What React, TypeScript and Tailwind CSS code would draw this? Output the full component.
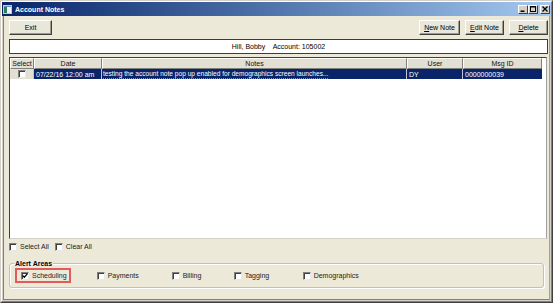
import React from "react";

function Check({ checked }: { checked?: boolean }) {
  return (
    <span className="inline-flex shrink-0 w-[8px] h-[8px] bg-white border-[1px] border-t-[#808080] border-l-[#808080] border-r-[#e8e8e8] border-b-[#e8e8e8] shadow-[inset_1px_1px_0_#404040] items-center justify-center">
      {checked && (
        <svg width="6" height="6" viewBox="0 0 6 6">
          <path d="M0.8 2.6 L2.3 4.2 L5.3 0.9" fill="none" stroke="#000" strokeWidth="1.3" />
        </svg>
      )}
    </span>
  );
}

function Btn({ children, w }: { children: React.ReactNode; w: string }) {
  return (
    <div
      className={`${w} h-[15px] flex items-center justify-center bg-[#e9e6da] border-[1px] border-t-white border-l-white border-r-[#404040] border-b-[#404040] shadow-[inset_-1px_-1px_0_#9d9a8f] text-[7px] leading-[9px] text-black`}
    >
      {children}
    </div>
  );
}

function WinBtn({ children }: { children: React.ReactNode }) {
  return (
    <div className="w-[10px] h-[9px] flex items-center justify-center bg-[#d4d0c8] border-[1px] border-t-white border-l-white border-r-[#404040] border-b-[#404040]">
      {children}
    </div>
  );
}

function HeaderCell({ w, children }: { w: string; children: React.ReactNode }) {
  return (
    <div
      className={`${w} shrink-0 h-full flex items-center justify-center bg-[#e2dfd3] border-[1px] border-t-white border-l-white border-r-[#808080] border-b-[#808080] text-[7px] leading-[9px] text-[#111]`}
    >
      {children}
    </div>
  );
}

export default function App() {
  return (
    <div className="w-[553px] h-[303px] bg-[#d4d0c8] border-[1px] border-t-[#d4d0c8] border-l-[#d4d0c8] border-r-[#404040] border-b-[#404040] flex flex-col overflow-hidden text-black font-['Liberation_Sans',Arial,sans-serif]">
      <div className="flex-1 flex flex-col border-[1px] border-t-white border-l-white border-r-[#808080] border-b-[#808080]">
        {/* Title bar */}
        <div className="h-[14px] shrink-0 flex items-center bg-linear-to-r from-[#0a246a] to-[#a6caf0] pl-[1px] pr-[1px]">
          <svg width="9" height="9" viewBox="0 0 9 9" className="shrink-0">
            <rect x="0" y="0" width="9" height="9" fill="#c8c8c8" />
            <rect x="1" y="1" width="7" height="7" fill="#f4f4f4" />
            <rect x="1" y="1" width="3" height="7" fill="#2e7d5b" />
            <rect x="1" y="1" width="7" height="1" fill="#6a8fb8" />
          </svg>
          <span className="ml-[3px] text-[7px] leading-[9px] font-bold text-white">Account Notes</span>
          <div className="ml-auto flex items-center">
            <WinBtn>
              <svg width="6" height="5" viewBox="0 0 6 5">
                <rect x="0.5" y="3.5" width="4" height="1.5" fill="#000" />
              </svg>
            </WinBtn>
            <WinBtn>
              <svg width="6" height="6" viewBox="0 0 6 6">
                <rect x="0.5" y="0.5" width="5" height="5" fill="none" stroke="#000" strokeWidth="1" />
                <rect x="0" y="0" width="6" height="1.5" fill="#000" />
              </svg>
            </WinBtn>
            <div className="w-[2px]" />
            <WinBtn>
              <svg width="6" height="6" viewBox="0 0 6 6">
                <path d="M0.5 0.5 L5.5 5.5 M5.5 0.5 L0.5 5.5" stroke="#000" strokeWidth="1.3" />
              </svg>
            </WinBtn>
          </div>
        </div>

        {/* Client area */}
        <div className="flex-1 flex flex-col bg-[#ece9d8] border-[1px] border-t-0 border-l-[#808080] border-r-[#a0a0a0] border-b-[#808080] ml-[1px] mr-[1px] mb-[1px] pl-[5px] pr-[1px] pt-[4px] pb-[11px]">
          {/* Buttons */}
          <div className="flex items-start justify-between">
            <Btn w="w-[43px]">Exit</Btn>
            <div className="flex gap-[5px]">
              <Btn w="w-[41px]">
                <span>
                  <span className="underline">N</span>ew Note
                </span>
              </Btn>
              <Btn w="w-[39px]">
                <span>
                  <span className="underline">E</span>dit Note
                </span>
              </Btn>
              <Btn w="w-[39px]">
                <span>
                  <span className="underline">D</span>elete
                </span>
              </Btn>
            </div>
          </div>

          {/* Header text box */}
          <div className="mt-[4px] h-[15px] bg-white border-[1px] border-[#3c3c3c] flex items-center justify-center text-[7px] leading-[9px] whitespace-pre">
            {"Hill, Bobby    Account: 105002"}
          </div>

          {/* Grid */}
          <div className="mt-[3px] mr-[1px] flex-1 bg-white border-[1px] border-t-[#404040] border-l-[#404040] border-r-[#a0a0a0] border-b-[#d4d0c8] flex flex-col">
            <div className="h-[11px] flex">
              <HeaderCell w="w-[24px]">Select</HeaderCell>
              <HeaderCell w="w-[68px]">Date</HeaderCell>
              <HeaderCell w="w-[305px]">Notes</HeaderCell>
              <HeaderCell w="w-[56px]">User</HeaderCell>
              <HeaderCell w="w-[79px]">Msg ID</HeaderCell>
            </div>
            <div className="h-[10px] flex text-[7px] leading-[9px] text-white">
              <div className="w-[24px] shrink-0 h-full bg-[#e2dfd3] flex items-center justify-center border-r-[1px] border-[#c8c6bc]">
                <Check />
              </div>
              <div className="w-[68px] shrink-0 h-full bg-[#0a246a] flex items-center pl-[2px] border-r-[1px] border-[#c0c4d8]">
                07/22/16 12:00 am
              </div>
              <div className="w-[305px] shrink-0 h-full bg-[#0a246a] flex items-center pl-[1px] border-r-[1px] border-[#c0c4d8]">
                <span className="text-[6.6px] border-b-[1px] border-dotted border-[#8090c0] leading-[8px]">
                  testing the account note pop up enabled for demographics screen launches...
                </span>
              </div>
              <div className="w-[56px] shrink-0 h-full bg-[#0a246a] flex items-center pl-[2px] border-r-[1px] border-[#c0c4d8]">
                DY
              </div>
              <div className="w-[79px] shrink-0 h-full bg-[#0a246a] flex items-center pl-[2px]">
                0000000039
              </div>
            </div>
          </div>

          {/* Select all / clear all */}
          <div className="mt-[3px] h-[9px] flex items-center text-[7px] leading-[9px] text-[#222]">
            <Check />
            <span className="ml-[3px]">Select All</span>
            <span className="ml-[6px] flex items-center">
              <Check />
            </span>
            <span className="ml-[3px]">Clear All</span>
          </div>

          {/* Alert Areas group */}
          <fieldset className="mt-[8px] mr-[4px] border-[1px] border-[#c5c2b2] rounded-[3px] shadow-[inset_1px_1px_0_#ffffff,1px_1px_0_#ffffff] pl-[5px] pr-[5px] pb-[4px]">
            <legend className="-ml-[1px] px-[1px] text-[7px] leading-[9px] font-bold text-black">Alert Areas</legend>
            <div className="flex items-center text-[7px] leading-[9px] text-[#222]">
              <div className="h-[15px] flex items-center border-[2px] border-[#e25a5a] pl-[4px] pr-[2px]">
                <Check checked />
                <span className="ml-[3px]">Scheduling</span>
              </div>
              <div className="ml-[26px] w-[75px] flex items-center">
                <Check />
                <span className="ml-[3px]">Payments</span>
              </div>
              <div className="w-[62px] flex items-center">
                <Check />
                <span className="ml-[3px]">Billing</span>
              </div>
              <div className="w-[69px] flex items-center">
                <Check />
                <span className="ml-[3px]">Tagging</span>
              </div>
              <div className="flex items-center">
                <Check />
                <span className="ml-[3px]">Demographics</span>
              </div>
            </div>
          </fieldset>
        </div>
      </div>
    </div>
  );
}
